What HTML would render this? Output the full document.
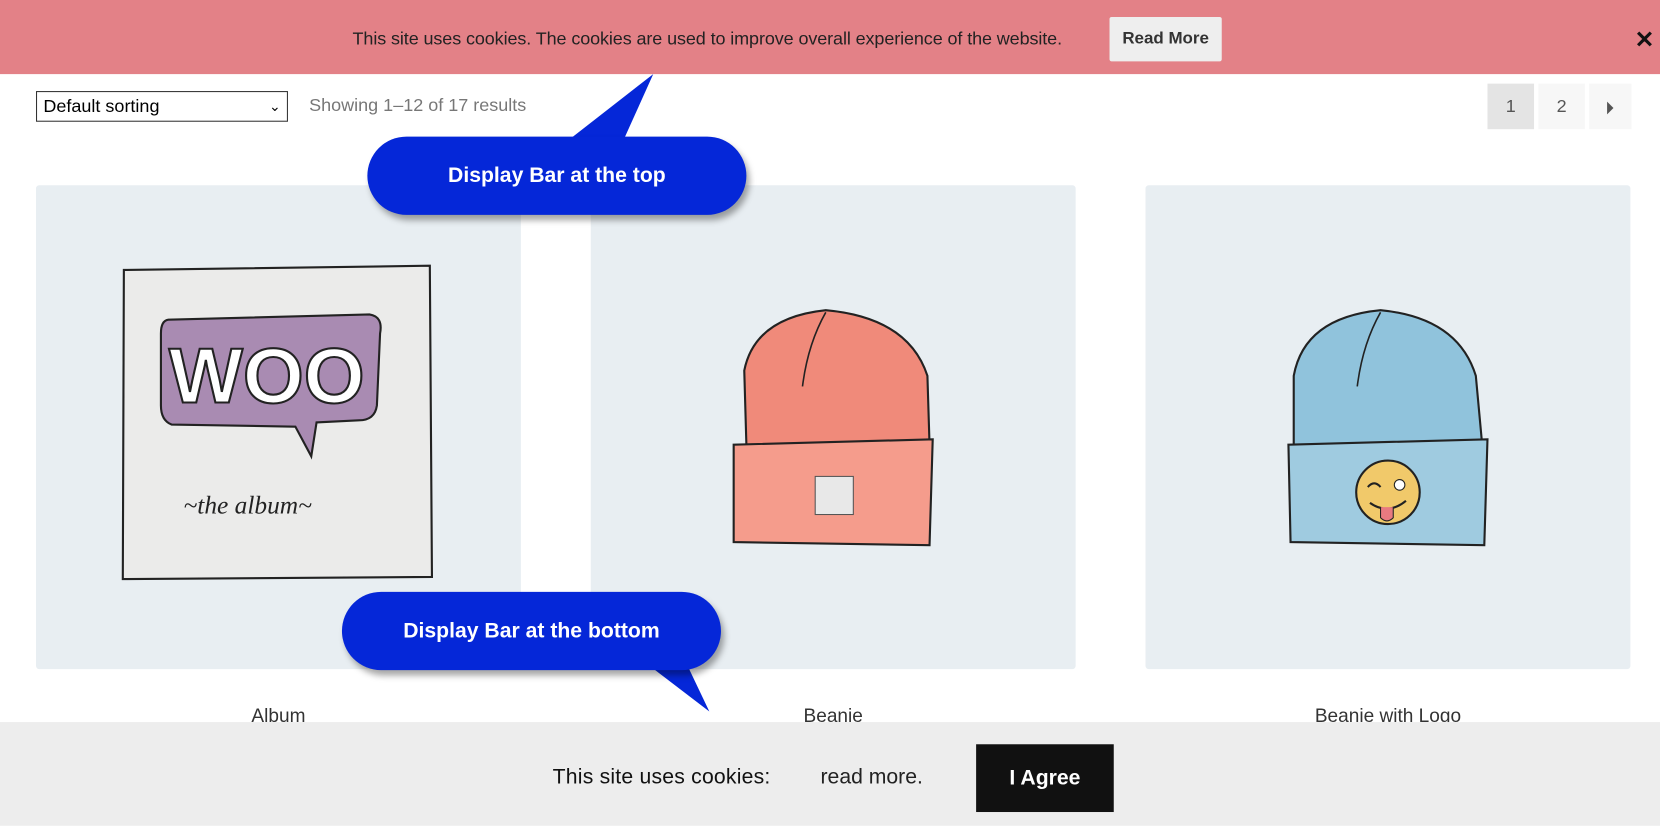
<!DOCTYPE html>
<html><head><meta charset="utf-8"><style>
html,body{margin:0;padding:0;width:1660px;height:826px;overflow:hidden;background:#fff}
#w{position:absolute;left:0;top:0;width:1568px;height:780px;transform:scale(1.0587);transform-origin:0 0;font-family:"Liberation Sans",sans-serif}
.abs{position:absolute}
.top{left:0;top:0;width:1568px;height:70px;background:#e38187}
.card{background:#e8eef2;border-radius:3px;width:458px;height:457px;top:175px}
.title{top:666px;width:458px;text-align:center;font-size:18px;color:#333}
.pill{background:#0527d8;color:#fff;font-weight:bold;font-size:20px;border-radius:37px;text-align:center;box-shadow:3px 5px 6px rgba(0,0,0,.35)}
.pg{top:79px;width:44px;height:43px;text-align:center;line-height:43px;font-size:17px;color:#555}
</style></head><body><div id="w">
<div class="abs top"></div>
<div class="abs" style="left:333px;top:27px;font-size:17px;color:#222;letter-spacing:-0.1px">This site uses cookies. The cookies are used to improve overall experience of the website.</div>
<div class="abs" style="left:1048px;top:16px;width:106px;height:42px;background:#eee;border-radius:2px;font-weight:bold;font-size:16px;line-height:42px;text-align:center;color:#333">Read More</div>
<div class="abs" style="left:1544px;top:25px;font-size:22px;font-weight:bold;color:#111">✕</div>

<div class="abs" style="left:34px;top:86px;height:27px;border:1px solid #333;font-size:17px;line-height:27px;padding-left:6px;width:230px">Default sorting<span style="position:absolute;right:6px;top:0;font-size:13px">&#8964;</span></div>
<div class="abs" style="left:292px;top:90px;font-size:17px;color:#777">Showing 1–12 of 17 results</div>
<div class="abs pg" style="left:1405px;background:#e4e4e4">1</div>
<div class="abs pg" style="left:1453px;background:#f7f7f7">2</div>
<div class="abs pg" style="left:1501px;width:40px;background:#f7f7f7"><svg width="10" height="14" viewBox="0 0 10 14" style="vertical-align:middle"><path d="M2 1L8 7L2 13Z" fill="#555"/></svg></div>

<div class="abs card" style="left:34px"></div>
<div class="abs card" style="left:558px"></div>
<div class="abs card" style="left:1082px"></div>

<svg class="abs" style="left:34px;top:175px" width="458" height="457">
<path d="M83 80L372 76L374 370L82 372Z" fill="#ebebea" stroke="#222" stroke-width="2"/>
<path d="M125 127L315 122Q328 124 325 140L322 208Q320 222 305 222L265 224L260 256L245 228L128 226Q118 222 118 208L118 140Q118 128 125 127Z" fill="#a98bb2" stroke="#222" stroke-width="2"/>
<text x="218" y="205" text-anchor="middle" font-family="Liberation Sans,sans-serif" font-weight="bold" font-size="74" fill="#fff" stroke="#222" stroke-width="2">WOO</text>
<text x="200" y="310" text-anchor="middle" font-family="Liberation Serif,serif" font-style="italic" font-size="24" fill="#222">~the   album~</text>
</svg>
<svg class="abs" style="left:558px;top:175px" width="458" height="457">
<path d="M147 245L145 175Q155 125 222 118Q300 125 318 180L320 245Z" fill="#f08a7a" stroke="#222" stroke-width="2"/>
<path d="M222 120Q205 150 200 190" fill="none" stroke="#222" stroke-width="1.5"/>
<path d="M135 245L323 240L320 340L135 337Z" fill="#f59c8c" stroke="#222" stroke-width="2"/>
<rect x="212" y="275" width="36" height="36" fill="#e8e8e8" stroke="#555"/>
</svg>
<svg class="abs" style="left:1082px;top:175px" width="458" height="457">
<path d="M140 245L140 180Q150 125 222 118Q295 125 312 180L318 245Z" fill="#90c3dc" stroke="#222" stroke-width="2"/>
<path d="M222 120Q205 150 200 190" fill="none" stroke="#222" stroke-width="1.5"/>
<path d="M135 245L323 240L320 340L137 337Z" fill="#9fcbe0" stroke="#222" stroke-width="2"/>
<circle cx="229" cy="290" r="30" fill="#f1c96a" stroke="#222" stroke-width="2"/>
<circle cx="240" cy="283" r="5" fill="#fff" stroke="#222"/>
<path d="M210 285Q216 278 222 285" fill="none" stroke="#222" stroke-width="2"/>
<path d="M212 300Q229 312 246 298" fill="none" stroke="#222" stroke-width="2"/>
<path d="M222 304L222 314Q228 320 234 314L234 304" fill="#e87a80" stroke="#222"/>
</svg>

<div class="abs title" style="left:34px">Album</div>
<div class="abs title" style="left:558px">Beanie</div>
<div class="abs title" style="left:1082px">Beanie with Logo</div>

<svg class="abs" style="left:0;top:0" width="1568" height="780"><path d="M617 70L540 130L590 130Z" fill="#0527d8"/><path d="M615 630L670 672L650 630Z" fill="#0527d8"/></svg>
<div class="abs pill" style="left:347px;top:129px;width:358px;height:74px;line-height:74px">Display Bar at the top</div>
<div class="abs pill" style="left:323px;top:559px;width:358px;height:74px;line-height:74px">Display Bar at the bottom</div>

<div class="abs" style="left:0;top:682px;width:1568px;height:98px;background:#ededed"></div>
<div class="abs" style="left:522px;top:723px;font-size:20px;color:#111;letter-spacing:0.2px">This site uses cookies:</div>
<div class="abs" style="left:775px;top:723px;font-size:20px;color:#222">read more.</div>
<div class="abs" style="left:922px;top:703px;width:130px;height:64px;background:#111;color:#fff;font-weight:bold;font-size:20px;line-height:64px;text-align:center">I Agree</div>
</div></body></html>
